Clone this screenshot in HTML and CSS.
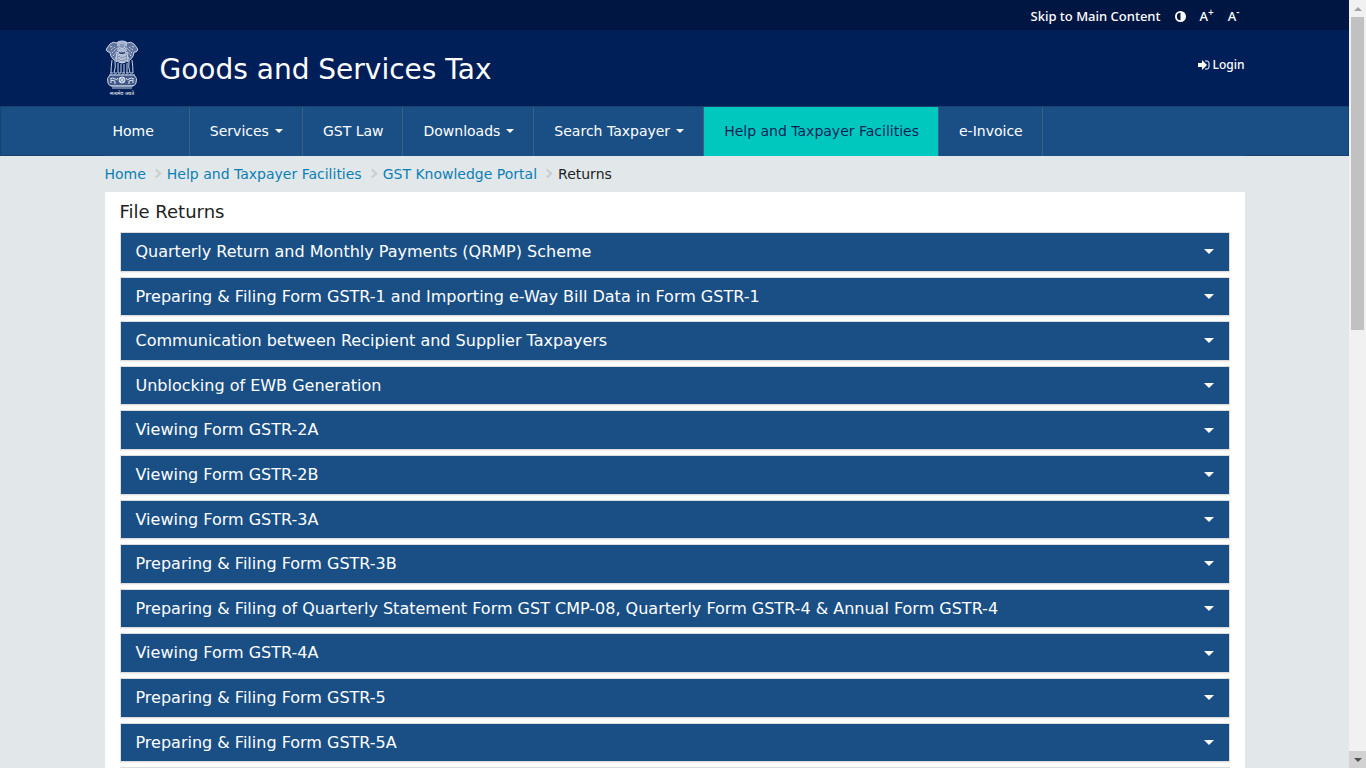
FILE: index.html
```html
<!DOCTYPE html>
<html lang="en">
<head>
  <meta charset="UTF-8">
  <meta name="viewport" content="width=device-width, initial-scale=1.0">
  <title>Goods and Services Tax - Returns</title>
  <link rel="stylesheet" href="styles.css">
</head>
<body>
  <div class="page">
    <div class="skiplinks">
      <div class="container">
        <a href="#main">Skip to Main Content</a>
        <a href="#" class="contrast" aria-label="Contrast">
          <svg width="11" height="11" viewBox="0 0 12 12"><circle cx="6" cy="6" r="5" fill="none" stroke="#fff" stroke-width="2"/><path d="M6 1a5 5 0 0 1 0 10z" fill="#fff"/></svg>
        </a>
        <a href="#">A<sup>+</sup></a>
        <a href="#">A<sup>-</sup></a>
      </div>
    </div>

    <header>
      <div class="container">
        <a href="#" class="emblem" aria-label="Emblem of India">
          <svg width="34" height="50" viewBox="0 0 34 50" fill="none" stroke="#c9d3e6" stroke-width="1">
            <path d="M12 3q0-2 5-2t5 2l1 5q0 4-6 4t-6-4z" fill="#8797b8"/>
            <path d="M12 3h10M12 5h3M19 5h3M14 7l3 2 3-2M15 10h4M13 8l2 3M21 8l-2 3"/>
            <path d="M12 3Q8 1 5 4L2 8q-2 2 1 4l2 0q0 4 3 7l4 3M22 3q4-2 7 1l3 4q2 2-1 4l-2 0q0 4-3 7l-4 3" fill="#5f739c"/>
            <path d="M5 7l3-1M6 10l4-3M7 13l5-5M8 16l5-6M10 19l4-8M29 7l-3-1M28 10l-4-3M27 13l-5-5M26 16l-5-6M24 19l-4-8" stroke-dasharray="2 1"/>
            <path d="M12 12q5 5 10 0l1 8q-6 6-12 0z" fill="#8797b8"/>
            <path d="M14 14v7M16 15v8M18 15v8M20 14v7" stroke="#dfe6f2" stroke-dasharray="2 1"/>
            <path d="M7 20q-1 7-1 13M10 21q1 6-1 12M13 23v10M16 24v9M19 24v9M22 23v10M24 21q-1 6 1 12M27 20q1 7 1 13"/>
            <path d="M5 33h24M4 35h26" stroke-dasharray="3 1"/>
            <path d="M5 35q-4 3-2 8 1 3 4 3h20q3 0 4-3 2-5-2-8z" fill="#435a89"/>
            <circle cx="17" cy="40" r="3" stroke="#dfe6f2"/>
            <path d="M17 37v6M14 40h6M15 38l4 4M19 38l-4 4" stroke="#c9d3e6"/>
            <path d="M5 39q3-2 5 0t3-1M6 43v-3l4 1v3M29 39q-3-2-5 0t-3-1M28 43v-3l-4 1v3" stroke="#dfe6f2"/>
            <path d="M6 46h22M7 48h20" stroke="#c9d3e6"/>
          </svg>
          <span class="motto" lang="hi">सत्यमेव जयते</span>
        </a>
        <h1><a href="#">Goods and Services Tax</a></h1>
        <a href="#" class="login">
          <svg width="12" height="10" viewBox="0 0 12 10"><path d="M0 3h4V0l5 5-5 5V7H0z" fill="#fff"/><path d="M7 1h2q2 0 2 2v4q0 2-2 2H7" fill="none" stroke="#fff"/></svg>
          Login
        </a>
      </div>
    </header>

    <nav>
      <div class="container">
        <ul class="menu">
          <li class="home"><a href="#">Home</a></li>
          <li><a href="#">Services <span class="caret"></span></a></li>
          <li><a href="#">GST Law</a></li>
          <li><a href="#">Downloads <span class="caret"></span></a></li>
          <li><a href="#">Search Taxpayer <span class="caret"></span></a></li>
          <li class="active"><a href="#">Help and Taxpayer Facilities</a></li>
          <li><a href="#">e-Invoice</a></li>
        </ul>
      </div>
    </nav>

    <main class="container" id="main">
      <ol class="breadcrumb">
        <li><a href="#">Home</a></li>
        <li><a href="#">Help and Taxpayer Facilities</a></li>
        <li><a href="#">GST Knowledge Portal</a></li>
        <li>Returns</li>
      </ol>

      <div class="content-pane">
        <h2>File Returns</h2>
        <div class="panel-group">
          <button type="button" class="panel">Quarterly Return and Monthly Payments (QRMP) Scheme</button>
          <button type="button" class="panel">Preparing &amp; Filing Form GSTR-1 and Importing e-Way Bill Data in Form GSTR-1</button>
          <button type="button" class="panel">Communication between Recipient and Supplier Taxpayers</button>
          <button type="button" class="panel">Unblocking of EWB Generation</button>
          <button type="button" class="panel">Viewing Form GSTR-2A</button>
          <button type="button" class="panel">Viewing Form GSTR-2B</button>
          <button type="button" class="panel">Viewing Form GSTR-3A</button>
          <button type="button" class="panel">Preparing &amp; Filing Form GSTR-3B</button>
          <button type="button" class="panel">Preparing &amp; Filing of Quarterly Statement Form GST CMP-08, Quarterly Form GSTR-4 &amp; Annual Form GSTR-4</button>
          <button type="button" class="panel">Viewing Form GSTR-4A</button>
          <button type="button" class="panel">Preparing &amp; Filing Form GSTR-5</button>
          <button type="button" class="panel">Preparing &amp; Filing Form GSTR-5A</button>
          <button type="button" class="panel" aria-label="More returns"></button>
        </div>
      </div>
    </main>
  </div>

  <div class="scrollbar" aria-hidden="true">
    <span class="arrow up"></span>
    <span class="thumb"></span>
    <span class="arrow down"></span>
  </div>
</body>
</html>
```
FILE: styles.css
```css
:root {
  --topbar: #001642;
  --header: #001f58;
  --blue: #1a4f86;
  --teal: #00c8bf;
  --link: #0b7fb5;
  --bg: #e2e8ea;
}

* {
  margin: 0;
  padding: 0;
  box-sizing: border-box;
}

body {
  display: flex;
  height: 100vh;
  overflow: hidden;
  font-family: Verdana, "DejaVu Sans", sans-serif;
  font-size: 14px;
  line-height: 20px;
  color: #212121;
  background: var(--bg);
}

a {
  color: inherit;
  text-decoration: none;
}

ul, ol {
  list-style: none;
}

.page {
  flex: 1;
  min-width: 0;
  overflow: hidden;
}

.container {
  width: 100%;
  max-width: 1170px;
  margin: 0 auto;
  padding: 0 15px;
}

/* top bar */
.skiplinks {
  background: var(--topbar);
  color: #fff;
  font-family: Tahoma, "Noto Sans", sans-serif;
  font-size: 13px;
  font-weight: 500;
}

.skiplinks .container {
  display: flex;
  justify-content: flex-end;
  align-items: center;
  gap: 14px;
  height: 30px;
  padding-top: 2px;
  padding-right: 20px;
}

.skiplinks svg {
  display: block;
}

sup {
  font-size: 10px;
  line-height: 0;
}

/* header */
header {
  background: var(--header);
  color: #fff;
}

header .container {
  display: flex;
  align-items: flex-start;
  height: 76px;
  padding-top: 10px;
}

.emblem {
  display: flex;
  flex-direction: column;
  align-items: center;
  width: 35px;
}

.emblem svg {
  display: block;
}

.motto {
  font-family: "Noto Sans", sans-serif;
  font-size: 5px;
  line-height: 6px;
  white-space: nowrap;
}

h1 {
  margin-left: 20px;
  font-size: 28px;
  font-weight: 400;
  line-height: 60px;
}

.login {
  display: flex;
  align-items: center;
  gap: 3px;
  margin: 15px 0 0 auto;
  font-family: Tahoma, "Noto Sans", sans-serif;
  font-size: 12px;
  font-weight: 500;
}

/* menu */
nav {
  background: var(--blue);
  border: 1px solid #17426f;
  color: #fff;
}

.menu {
  display: flex;
  margin-bottom: -1px;
  background: var(--blue);
}

.menu li {
  border-right: 1px solid #3c6081;
}

.menu a {
  display: flex;
  align-items: center;
  height: 49px;
  padding: 0 19px 1px 20px;
}

.menu .home a {
  padding: 0 35px 1px 8px;
}

.menu .active {
  background: var(--teal);
  color: #001f58;
}

.caret {
  margin-left: 6px;
  border-top: 4px solid;
  border-left: 4px solid transparent;
  border-right: 4px solid transparent;
}

/* breadcrumb */
.breadcrumb {
  display: flex;
  padding: 8px 0;
}

.breadcrumb a {
  color: var(--link);
}

.breadcrumb li + li::before {
  content: "";
  display: inline-block;
  width: 5px;
  height: 5px;
  margin: 0 7px 2px 7px;
  border: solid #c8ced1;
  border-width: 2px 2px 0 0;
  transform: rotate(45deg);
}

/* content */
.content-pane {
  background: #fff;
  padding: 10px 15px;
}

h2 {
  margin-bottom: 10px;
  font-size: 18px;
  font-weight: 400;
  line-height: 20px;
}

.panel-group {
  display: grid;
  gap: 5px;
}

.panel {
  display: flex;
  justify-content: space-between;
  align-items: center;
  padding: 10px 15px;
  border: 1px solid #ddd;
  background: var(--blue);
  box-shadow: 0 1px 1px rgba(0, 0, 0, 0.05);
  color: #fff;
  font: inherit;
  font-size: 16px;
  line-height: 1.1;
  text-align: left;
  cursor: pointer;
}

.panel:empty {
  min-height: 39px;
}

.panel::after {
  content: "";
  border-top: 5px solid;
  border-left: 5px solid transparent;
  border-right: 5px solid transparent;
}

/* scrollbar */
.scrollbar {
  display: flex;
  flex-direction: column;
  width: 17px;
  background: #f1f1f1;
}

.arrow {
  display: flex;
  justify-content: center;
  align-items: center;
  height: 17px;
}

.arrow::before {
  content: "";
  border-left: 4px solid transparent;
  border-right: 4px solid transparent;
}

.up::before {
  border-bottom: 4px solid #a3a3a3;
}

.down {
  margin-top: auto;
  background: #d2d2d2;
}

.down::before {
  border-top: 4px solid #505050;
}

.thumb {
  height: 313px;
  margin: 0 2px;
  background: #c1c1c1;
}
```
